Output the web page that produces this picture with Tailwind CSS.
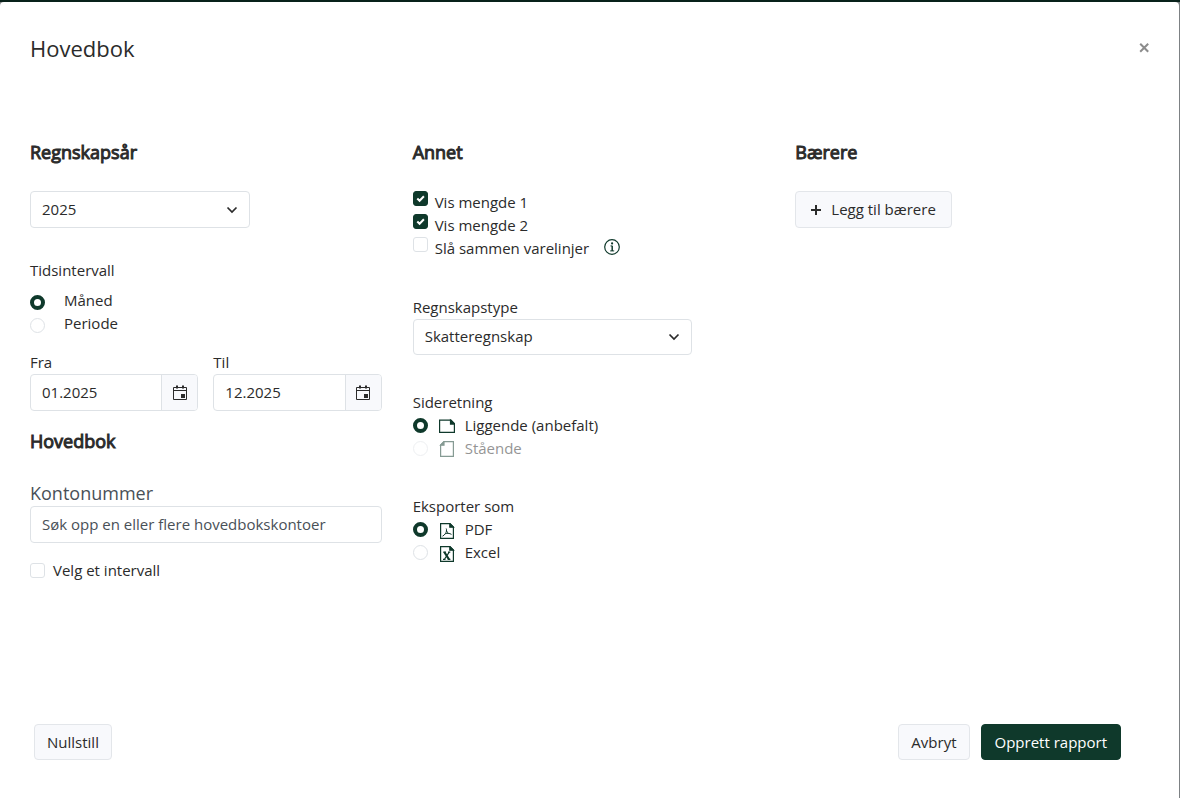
<!DOCTYPE html>
<html lang="no">
  <head>
    <meta charset="UTF-8" />
    <meta name="viewport" content="width=device-width, initial-scale=1.0" />
    <title>Hovedbok</title>
    <script src="https://cdn.jsdelivr.net/npm/@tailwindcss/browser@4"></script>
  </head>
  <body class="min-h-screen bg-[#7d8184] font-['Open_Sans',sans-serif] text-[15px] leading-[23px] text-[#2b2b2b]">
    <div class="flex min-h-screen flex-col border-t-2 border-[#08211a] pr-px">
      <form class="flex grow flex-col rounded-t-sm bg-white px-[30px] pb-[38px]" role="dialog" aria-labelledby="dialog-title">
        <header class="flex items-center justify-between pt-8">
          <h1 id="dialog-title" class="text-[22px] leading-7">Hovedbok</h1>
          <button type="button" aria-label="Lukk" class="text-[#8c8c8c]">
            <svg class="size-[10px]" viewBox="0 0 10 10" fill="none" stroke="currentColor" stroke-width="2"><path d="M1.200.8l8 8M9.200.8l-8 8" /></svg>
          </button>
        </header>

        <main class="mt-[78px] grid grid-cols-3 gap-[31px] pr-0.5">
          <!-- Regnskapsår + konto -->
          <section>
            <h2 class="text-lg leading-6 [-webkit-text-stroke:1px]">Regnskapsår</h2>
            <div class="relative mt-[27px] w-[220px]">
              <select aria-label="Regnskapsår" class="h-[37px] w-full appearance-none rounded border border-[#dee2e6] bg-white px-[11px]">
                <option>2025</option>
              </select>
              <svg class="pointer-events-none absolute top-[15px] right-3 h-2 w-3" viewBox="0 0 12 8" fill="none" stroke="currentColor" stroke-width="1.7"><path d="M1.500 1.500L6 6l4.500-4.500" /></svg>
            </div>

            <fieldset class="mt-[31px]">
              <legend class="mb-[7px]">Tidsintervall</legend>
              <label class="flex items-end gap-[19px]">
                <input type="radio" name="interval" checked class="mb-0.5 size-[15px] appearance-none rounded-full border border-[#dee2e6] bg-white checked:border-4 checked:border-[#0f392b]" />
                Måned
              </label>
              <label class="flex items-end gap-[19px]">
                <input type="radio" name="interval" class="mb-0.5 size-[15px] appearance-none rounded-full border border-[#dee2e6] bg-white checked:border-4 checked:border-[#0f392b]" />
                Periode
              </label>
            </fieldset>

            <div class="mt-4 grid grid-cols-2 gap-[15px]">
              <div>
                <label for="from" class="block">Fra</label>
                <div class="flex h-[37px] overflow-hidden rounded border border-[#dee2e6]">
                  <input id="from" type="text" value="01.2025" class="w-full min-w-0 px-[11px]" />
                  <button type="button" aria-label="Velg fra-måned" class="flex w-9 shrink-0 items-center justify-center border-l border-[#dee2e6] bg-[#f8f9fc]">
                    <svg class="size-4" viewBox="0 0 16 16" fill="none" stroke="currentColor"><path stroke-width="1" d="M1.500 2.500h13v12h-13zM1.500 5.500h13" /><path stroke-width="2" d="M5 .5v3M11 .5v3" /><path fill="currentColor" stroke="none" d="M9 9h4v4H9z" /></svg>
                  </button>
                </div>
              </div>
              <div>
                <label for="to" class="block">Til</label>
                <div class="flex h-[37px] overflow-hidden rounded border border-[#dee2e6]">
                  <input id="to" type="text" value="12.2025" class="w-full min-w-0 px-[11px]" />
                  <button type="button" aria-label="Velg til-måned" class="flex w-9 shrink-0 items-center justify-center border-l border-[#dee2e6] bg-[#f8f9fc]">
                    <svg class="size-4" viewBox="0 0 16 16" fill="none" stroke="currentColor"><path stroke-width="1" d="M1.500 2.500h13v12h-13zM1.500 5.500h13" /><path stroke-width="2" d="M5 .5v3M11 .5v3" /><path fill="currentColor" stroke="none" d="M9 9h4v4H9z" /></svg>
                  </button>
                </div>
              </div>
            </div>

            <h2 class="mt-[18px] text-lg leading-6 [-webkit-text-stroke:1px]">Hovedbok</h2>
            <label for="account" class="mt-7 mb-px block text-lg leading-6 text-[#495057]">Kontonummer</label>
            <input id="account" type="text" placeholder="Søk opp en eller flere hovedbokskontoer" class="h-[37px] w-full rounded border border-[#dee2e6] px-[11px] pb-0.5 placeholder:text-[#495057]" />
            <label class="mt-4 flex items-center gap-2">
              <input type="checkbox" class="size-[15px] appearance-none rounded-[3px] border border-[#dee2e6] bg-white" />
              Velg et intervall
            </label>
          </section>

          <!-- Annet -->
          <section>
            <h2 class="text-lg leading-6 [-webkit-text-stroke:1px]">Annet</h2>
            <div class="mt-[27px]">
              <label class="flex items-start gap-[7px]">
                <span class="relative flex">
                  <input type="checkbox" checked class="size-[15px] appearance-none rounded-[3px] border border-[#dee2e6] checked:border-[#0f392b] checked:bg-[#0f392b]" />
                  <svg class="absolute inset-0 size-[15px] text-white" viewBox="0 0 15 15" fill="none" stroke="currentColor" stroke-width="2"><path d="M4.300 7.500l2.300 2.300 4.300-4.500" /></svg>
                </span>
                Vis mengde 1
              </label>
              <label class="flex items-start gap-[7px]">
                <span class="relative flex">
                  <input type="checkbox" checked class="size-[15px] appearance-none rounded-[3px] border border-[#dee2e6] checked:border-[#0f392b] checked:bg-[#0f392b]" />
                  <svg class="absolute inset-0 size-[15px] text-white" viewBox="0 0 15 15" fill="none" stroke="currentColor" stroke-width="2"><path d="M4.300 7.500l2.300 2.300 4.300-4.500" /></svg>
                </span>
                Vis mengde 2
              </label>
              <div class="flex items-start gap-[15px]">
                <label class="flex items-start gap-[7px]">
                  <input type="checkbox" class="size-[15px] appearance-none rounded-[3px] border border-[#dee2e6] bg-white" />
                  Slå sammen varelinjer
                </label>
                <button type="button" aria-label="Informasjon" class="pt-0.5 text-[#0f392b]">
                  <svg class="size-4" viewBox="0 0 16 16" fill="none" stroke="currentColor"><circle cx="8" cy="8" r="7.300" stroke-width="1.200" /><path stroke-width="1.500" d="M8.200 12V7" /><path stroke-width="1" d="M6.500 6.900h2M6.200 11.900h4" /><circle cx="8.100" cy="4.400" r="1.100" fill="currentColor" stroke="none" /></svg>
                </button>
              </div>
            </div>

            <label for="type" class="mt-9 block">Regnskapstype</label>
            <div class="relative w-[279px]">
              <select id="type" class="h-9 w-full appearance-none rounded border border-[#dee2e6] bg-white px-[11px] pb-0.5">
                <option>Skatteregnskap</option>
              </select>
              <svg class="pointer-events-none absolute top-[14px] right-3 h-2 w-3" viewBox="0 0 12 8" fill="none" stroke="currentColor" stroke-width="1.7"><path d="M1.500 1.500L6 6l4.500-4.500" /></svg>
            </div>

            <fieldset class="mt-9">
              <legend>Sideretning</legend>
              <label class="flex items-center">
                <input type="radio" name="orientation" checked class="size-[15px] appearance-none rounded-full border border-[#dee2e6] bg-white checked:border-4 checked:border-[#0f392b]" />
                <svg class="mr-2.5 ml-[11px] size-4 text-[#0f392b]" viewBox="0 0 16 16" fill="none" stroke="currentColor" stroke-width="1.200"><path d="M.6 2.100h11.400l3.400 3.400v8.900H.6z" /><path fill="currentColor" d="M11.500 2.100v4h3.900z" /></svg>
                Liggende (anbefalt)
              </label>
              <label class="flex items-center opacity-50">
                <input type="radio" name="orientation" disabled class="size-[15px] appearance-none rounded-full border border-[#dee2e6] bg-white" />
                <svg class="mr-2.5 ml-[11px] size-4 text-[#0f392b]" viewBox="0 0 16 16" fill="none" stroke="currentColor" stroke-width="1.200"><path d="M5 .6h9.400v14.800H1.600V4z" /><path fill="currentColor" d="M5 .6v3.600H1.600z" /></svg>
                Stående
              </label>
            </fieldset>

            <fieldset class="mt-[35px]">
              <legend>Eksporter som</legend>
              <label class="flex items-center">
                <input type="radio" name="format" checked class="size-[15px] appearance-none rounded-full border border-[#dee2e6] bg-white checked:border-4 checked:border-[#0f392b]" />
                <svg class="mt-[3px] mr-2.5 ml-[11px] size-4 text-[#0f392b]" viewBox="0 0 16 16" fill="none" stroke="currentColor" stroke-width="1.200"><path d="M1.600.6h9.400l3.400 3.400v11.400H1.600z" /><path fill="currentColor" d="M10.800.6v3.600h3.600z" /><path stroke-width="1" d="M7.200 5.500c.8 1.600.2 3.600-.9 5.200-.8 1.200-1.800 2-2.800 2.500M6.300 10.700c2-.6 4.300-.5 6.200.7M7.400 7.500c.5 1.400 1.300 2.500 2.400 3.200" /></svg>
                PDF
              </label>
              <label class="flex items-center">
                <input type="radio" name="format" class="size-[15px] appearance-none rounded-full border border-[#dee2e6] bg-white checked:border-4 checked:border-[#0f392b]" />
                <svg class="mt-[3px] mr-2.5 ml-[11px] size-4 text-[#0f392b]" viewBox="0 0 16 16" fill="none" stroke="currentColor" stroke-width="1.200"><path d="M1.600.6h9.400l3.400 3.400v11.400H1.600z" /><path fill="currentColor" d="M10.800.6v3.600h3.600z" /><path stroke-width="2.200" d="M5.300 6l4.700 7.500" /><path stroke-width="1.300" d="M10.300 6l-5 7.500M4.300 6.200h2.500M9 6.200h2.300M4 13.400h2.500M8.800 13.400h2.600" /></svg>
                Excel
              </label>
            </fieldset>
          </section>

          <!-- Bærere -->
          <section>
            <h2 class="text-lg leading-6 [-webkit-text-stroke:1px]">Bærere</h2>
            <button type="button" class="mt-[27px] flex h-[37px] items-center gap-2.5 rounded border border-[#e3e6ea] bg-[#f8f9fc] px-[15px]">
              <svg class="size-[10px]" viewBox="0 0 10 10" fill="none" stroke="currentColor" stroke-width="2"><path d="M5 0v10M0 5h10" /></svg>
              Legg til bærere
            </button>
          </section>
        </main>

        <footer class="mt-auto flex items-center gap-[11px] pr-7 pl-1">
          <button type="reset" class="mr-auto h-9 rounded border border-[#e3e6ea] bg-[#f8f9fc] px-3">Nullstill</button>
          <button type="button" class="h-9 rounded border border-[#e3e6ea] bg-[#f8f9fc] px-3">Avbryt</button>
          <button type="submit" class="h-9 rounded border border-[#0f392b] bg-[#0f392b] px-[13px] text-white">Opprett rapport</button>
        </footer>
      </form>
    </div>
  </body>
</html>
